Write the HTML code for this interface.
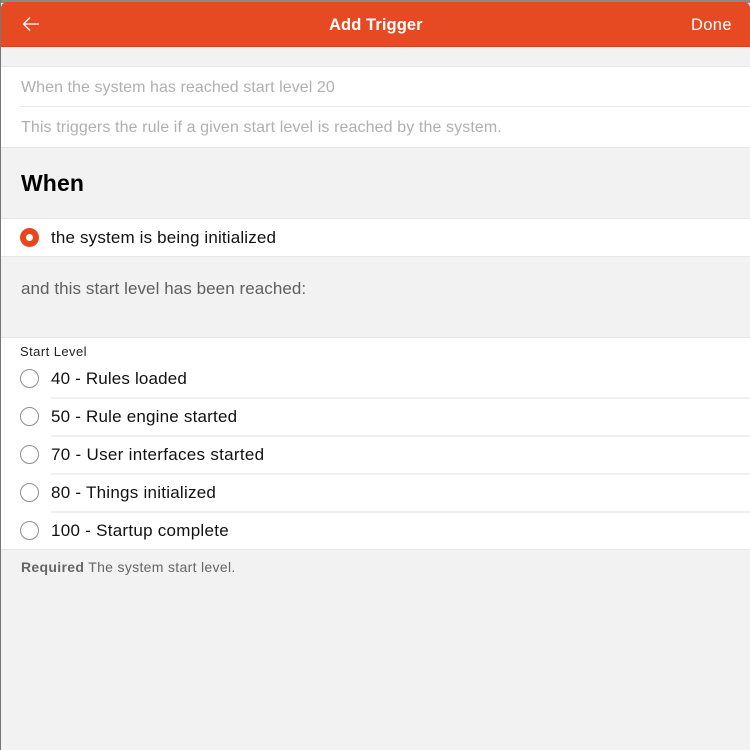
<!DOCTYPE html>
<html><head><meta charset="utf-8"><style>
html,body{margin:0;padding:0;width:750px;height:750px;overflow:hidden;background:#f2f2f2}
body{position:relative;font-family:"Liberation Sans",sans-serif}
.t{position:absolute;white-space:nowrap;line-height:20px;height:20px}
.b{position:absolute}
.r{position:absolute;left:20px;width:17px;height:17px;border:1px solid #8e8e8e;border-radius:50%;background:#fff}
.o{font-size:17px;color:#111;left:51px}
.l{position:absolute;left:51px;width:699px;height:2px;background:#f0f0f0}
</style></head><body>
<div class="b" style="left:0;top:0;width:750px;height:3px;background:#8a8a88"></div>
<div class="b" style="left:0;top:0;width:1px;height:750px;background:#777"></div>
<div class="b" style="left:1px;top:2px;width:749px;height:44px;background:#e64a22;border-radius:6px 6px 0 0"></div>
<div class="b" style="left:1px;top:46px;width:749px;height:1px;background:#e23c14"></div>
<svg class="b" style="left:22px;top:16px" width="19" height="16" viewBox="0 0 19 16"><path d="M17 8H2M8 1.500L1.500 8l6.500 6.500" fill="none" stroke="#fff" stroke-width="1.300"/></svg>
<div class="t" style="left:329px;top:15px;color:#fff;font-size:16.500px;font-weight:bold;letter-spacing:.1px">Add Trigger</div>
<div class="t" style="left:691px;top:15px;color:#fff;font-size:16.500px;letter-spacing:.35px">Done</div>

<div class="b" style="left:1px;top:66px;width:749px;height:82px;background:#fff;border-top:1px solid #e6e6e6;border-bottom:1px solid #e6e6e6;box-sizing:border-box"></div>
<div class="b" style="left:20px;top:106px;width:730px;height:1px;background:#e9e9e9"></div>
<div class="t" style="left:21px;top:78px;color:#b0b0b0;font-size:16px;letter-spacing:.06px">When the system has reached start level 20</div>
<div class="t" style="left:21px;top:118px;color:#b0b0b0;font-size:16px;letter-spacing:.11px">This triggers the rule if a given start level is reached by the system.</div>

<div class="t" style="left:21px;top:173px;color:#000;font-size:23px;font-weight:bold;letter-spacing:.1px">When</div>

<div class="b" style="left:1px;top:218px;width:749px;height:39px;background:#fff;border-top:1px solid #e6e6e6;border-bottom:1px solid #e6e6e6;box-sizing:border-box"></div>
<div class="b" style="left:20px;top:228px;width:19px;height:19px;border-radius:50%;background:#e8461e"></div>
<div class="b" style="left:26px;top:234px;width:7px;height:7px;border-radius:50%;background:#fff"></div>
<div class="t o" style="top:228px;letter-spacing:.16px">the system is being initialized</div>

<div class="t" style="left:21px;top:279px;color:#5f5f5f;font-size:17px;letter-spacing:.07px">and this start level has been reached:</div>

<div class="b" style="left:1px;top:337px;width:749px;height:213px;background:#fff;border-top:1px solid #e6e6e6;border-bottom:1px solid #e6e6e6;box-sizing:border-box"></div>
<div class="t" style="left:20px;top:342px;color:#222;font-size:13px;letter-spacing:.44px">Start Level</div>

<div class="r" style="top:369px"></div>
<div class="t o" style="top:369px;letter-spacing:.16px">40 - Rules loaded</div>
<div class="l" style="top:397px"></div>
<div class="r" style="top:407px"></div>
<div class="t o" style="top:407px;letter-spacing:.2px">50 - Rule engine started</div>
<div class="l" style="top:435px"></div>
<div class="r" style="top:445px"></div>
<div class="t o" style="top:445px;letter-spacing:.3px">70 - User interfaces started</div>
<div class="l" style="top:473px"></div>
<div class="r" style="top:483px"></div>
<div class="t o" style="top:483px;letter-spacing:.25px">80 - Things initialized</div>
<div class="l" style="top:511px"></div>
<div class="r" style="top:521px"></div>
<div class="t o" style="top:521px;letter-spacing:.27px">100 - Startup complete</div>

<div class="t" style="left:21px;top:557px;color:#666;font-size:14px;letter-spacing:.32px"><b>Required</b> The system start level.</div>
</body></html>
